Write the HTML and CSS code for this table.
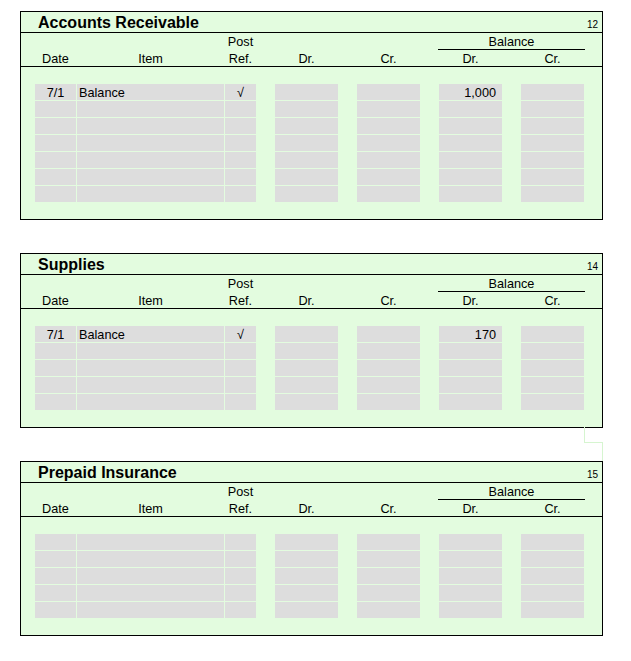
FILE: index.html
```html
<!DOCTYPE html>
<html lang="en">
<head>
<meta charset="utf-8">
<title>General Ledger</title>
<link rel="stylesheet" href="styles.css">
</head>
<body>
<div class="page">

  <section class="ledger">
    <div class="ledger-title">
      <h2 class="ledger-name">Accounts Receivable</h2>
      <span class="acct-no">12</span>
    </div>
    <div class="ledger-head">
      <span class="h"></span><span class="h"></span><span class="h">Post</span><span class="h amt"></span><span class="h amt"></span><span class="h amt balance">Balance</span>
      <span class="h sub">Date</span><span class="h sub">Item</span><span class="h sub">Ref.</span><span class="h sub amt">Dr.</span><span class="h sub amt">Cr.</span><span class="h sub amt">Dr.</span><span class="h sub amt">Cr.</span>
    </div>
    <div class="ledger-body">
      <span class="c date">7/1</span><span class="c item">Balance</span><span class="c ref">√</span><span class="c amt"></span><span class="c amt"></span><span class="c amt num">1,000</span><span class="c amt"></span>
      <span class="c"></span><span class="c"></span><span class="c"></span><span class="c amt"></span><span class="c amt"></span><span class="c amt"></span><span class="c amt"></span>
      <span class="c"></span><span class="c"></span><span class="c"></span><span class="c amt"></span><span class="c amt"></span><span class="c amt"></span><span class="c amt"></span>
      <span class="c"></span><span class="c"></span><span class="c"></span><span class="c amt"></span><span class="c amt"></span><span class="c amt"></span><span class="c amt"></span>
      <span class="c"></span><span class="c"></span><span class="c"></span><span class="c amt"></span><span class="c amt"></span><span class="c amt"></span><span class="c amt"></span>
      <span class="c"></span><span class="c"></span><span class="c"></span><span class="c amt"></span><span class="c amt"></span><span class="c amt"></span><span class="c amt"></span>
      <span class="c"></span><span class="c"></span><span class="c"></span><span class="c amt"></span><span class="c amt"></span><span class="c amt"></span><span class="c amt"></span>
    </div>
  </section>

  <section class="ledger with-stray">
    <div class="ledger-title">
      <h2 class="ledger-name">Supplies</h2>
      <span class="acct-no">14</span>
    </div>
    <div class="ledger-head">
      <span class="h"></span><span class="h"></span><span class="h">Post</span><span class="h amt"></span><span class="h amt"></span><span class="h amt balance">Balance</span>
      <span class="h sub">Date</span><span class="h sub">Item</span><span class="h sub">Ref.</span><span class="h sub amt">Dr.</span><span class="h sub amt">Cr.</span><span class="h sub amt">Dr.</span><span class="h sub amt">Cr.</span>
    </div>
    <div class="ledger-body">
      <span class="c date">7/1</span><span class="c item">Balance</span><span class="c ref">√</span><span class="c amt"></span><span class="c amt"></span><span class="c amt num">170</span><span class="c amt"></span>
      <span class="c"></span><span class="c"></span><span class="c"></span><span class="c amt"></span><span class="c amt"></span><span class="c amt"></span><span class="c amt"></span>
      <span class="c"></span><span class="c"></span><span class="c"></span><span class="c amt"></span><span class="c amt"></span><span class="c amt"></span><span class="c amt"></span>
      <span class="c"></span><span class="c"></span><span class="c"></span><span class="c amt"></span><span class="c amt"></span><span class="c amt"></span><span class="c amt"></span>
      <span class="c"></span><span class="c"></span><span class="c"></span><span class="c amt"></span><span class="c amt"></span><span class="c amt"></span><span class="c amt"></span>
    </div>
    <span class="stray-a"></span>
    <span class="stray-b"></span>
  </section>

  <section class="ledger">
    <div class="ledger-title">
      <h2 class="ledger-name">Prepaid Insurance</h2>
      <span class="acct-no">15</span>
    </div>
    <div class="ledger-head">
      <span class="h"></span><span class="h"></span><span class="h">Post</span><span class="h amt"></span><span class="h amt"></span><span class="h amt balance">Balance</span>
      <span class="h sub">Date</span><span class="h sub">Item</span><span class="h sub">Ref.</span><span class="h sub amt">Dr.</span><span class="h sub amt">Cr.</span><span class="h sub amt">Dr.</span><span class="h sub amt">Cr.</span>
    </div>
    <div class="ledger-body">
      <span class="c"></span><span class="c"></span><span class="c"></span><span class="c amt"></span><span class="c amt"></span><span class="c amt"></span><span class="c amt"></span>
      <span class="c"></span><span class="c"></span><span class="c"></span><span class="c amt"></span><span class="c amt"></span><span class="c amt"></span><span class="c amt"></span>
      <span class="c"></span><span class="c"></span><span class="c"></span><span class="c amt"></span><span class="c amt"></span><span class="c amt"></span><span class="c amt"></span>
      <span class="c"></span><span class="c"></span><span class="c"></span><span class="c amt"></span><span class="c amt"></span><span class="c amt"></span><span class="c amt"></span>
      <span class="c"></span><span class="c"></span><span class="c"></span><span class="c amt"></span><span class="c amt"></span><span class="c amt"></span><span class="c amt"></span>
    </div>
  </section>

</div>
</body>
</html>
```
FILE: styles.css
```css
* {
  box-sizing: border-box;
}

html, body {
  margin: 0;
  padding: 0;
  background: #ffffff;
}

body {
  font-family: "Liberation Sans", Arial, sans-serif;
  font-size: 12.7px;
  color: #000000;
}

.page {
  padding: 11px 0 0 20px;
  display: flex;
  flex-direction: column;
  gap: 33px;
}

.ledger {
  width: 583px;
  border: 1px solid #000000;
  background: #e3fcdf;
}

.with-stray {
  position: relative;
}

.ledger-title {
  height: 21px;
  border-bottom: 1px solid #000000;
  display: flex;
  align-items: baseline;
  justify-content: space-between;
  padding: 0 4px 0 17px;
}

.ledger-name {
  margin: 0;
  font-size: 16px;
  font-weight: bold;
  line-height: 22px;
}

.acct-no {
  font-size: 10px;
  line-height: 22px;
}

.ledger-head,
.ledger-body {
  display: grid;
  grid-template-columns: 41px 147px 31px repeat(4, 81px);
  column-gap: 1px;
}

.ledger-head {
  height: 34px;
  padding: 1px 0 0 14px;
  grid-auto-rows: 16px;
  border-bottom: 1px solid #000000;
}

.h {
  text-align: center;
  line-height: 16px;
  white-space: nowrap;
}

.h.sub {
  line-height: 18px;
}

.amt {
  margin-left: 18px;
}

.h.balance {
  grid-column: 6 / 8;
  margin-left: 17px;
  margin-right: -1px;
  line-height: 17px;
  border-bottom: 1px solid #000000;
}

.ledger-body {
  padding: 17px 0 17px 14px;
  row-gap: 1px;
  grid-auto-rows: 16px;
}

.c {
  background: #dddddd;
  line-height: 18px;
  height: 16px;
  white-space: nowrap;
}

.c.date {
  text-align: center;
}

.c.item {
  padding-left: 2px;
}

.c.ref {
  text-align: center;
}

.c.num {
  text-align: right;
  padding-right: 6px;
}

.stray-a {
  position: absolute;
  left: 563px;
  top: 100%;
  width: 1px;
  height: 16px;
  background: #d6f5d0;
}

.stray-b {
  position: absolute;
  left: 563px;
  top: calc(100% + 15px);
  width: 19px;
  height: 19px;
  border-top: 1px solid #d6f5d0;
  border-right: 1px solid #d6f5d0;
}
```
